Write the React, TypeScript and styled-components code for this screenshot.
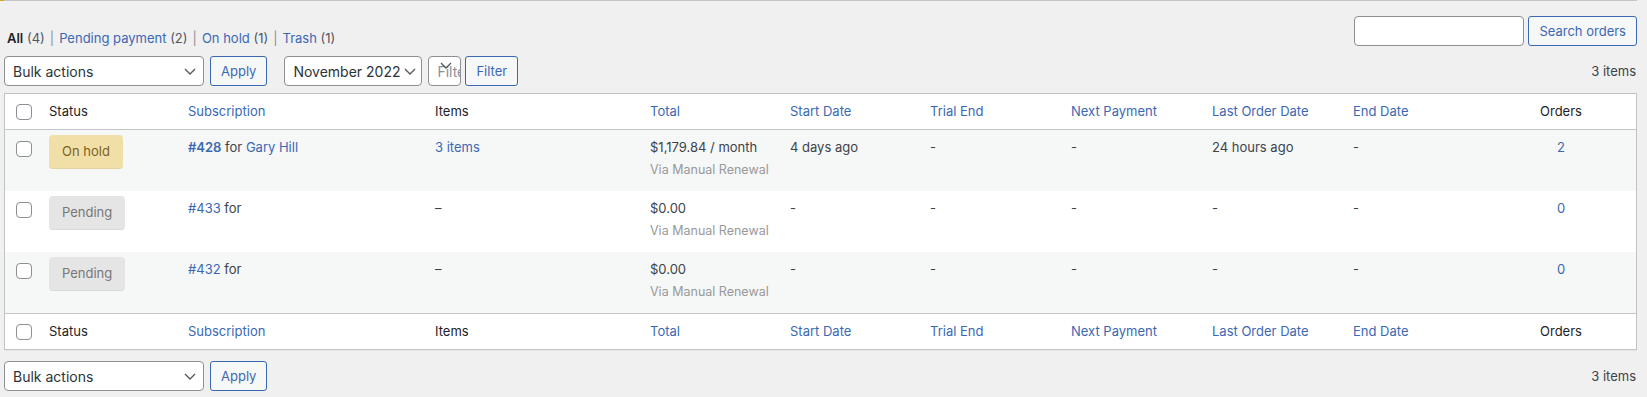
import React from "react";
import styled, { createGlobalStyle } from "styled-components";

const GlobalStyle = createGlobalStyle`
  html, body {
    margin: 0;
    padding: 0;
    background: #f0f0f1;
    font-family: Inter, "Noto Sans", "Liberation Sans", sans-serif;
    font-size: 13px;
    color: #3c434a;
  }
`;

const Wrap = styled.div`
  padding: 0 10px 0 0;
`;

const NoticeEdge = styled.div`
  height: 1px;
  background: #c3c4c7;
  border-left: 4px solid #dba617;
`;

const Inner = styled.div`
  padding-left: 4px;
`;

const TopRow = styled.div`
  display: flex;
  justify-content: space-between;
  align-items: flex-start;
  padding-top: 15px;
`;

const SubSub = styled.ul`
  list-style: none;
  margin: 12px 0 0 3px;
  padding: 0;
  display: flex;
  line-height: 20px;
  color: #50575e;
`;

const SubItem = styled.li`
  white-space: pre;
`;

const SubLink = styled.a<{ $current?: boolean }>`
  color: ${(p) => (p.$current ? "#1d2327" : "#3b68b3")};
  font-weight: ${(p) => (p.$current ? 600 : 400)};
  text-decoration: none;
`;

const Sep = styled.span`
  color: #8c8f94;
  padding: 0 5px;
`;

const SearchBox = styled.div`
  display: flex;
  gap: 4px;
`;

const SearchInput = styled.input`
  width: 170px;
  height: 30px;
  box-sizing: border-box;
  border: 1px solid #8c8f94;
  border-radius: 4px;
  background: #fff;
  padding: 0 8px;
  font: inherit;
`;

const Button = styled.button`
  height: 30px;
  box-sizing: border-box;
  border: 1px solid #3b68b3;
  border-radius: 3px;
  background: #f6f7f7;
  color: #3b68b3;
  font-family: inherit;
  font-size: 13px;
  padding: 0 10px;
  cursor: pointer;
  white-space: nowrap;
`;

const TableNav = styled.div<{ $bottom?: boolean }>`
  display: flex;
  align-items: center;
  justify-content: space-between;
  height: 30px;
  margin-top: ${(p) => (p.$bottom ? "11px" : "8px")};
`;

const Actions = styled.div`
  display: flex;
  align-items: center;
  gap: 6px;
`;

const Group = styled.div`
  display: flex;
  align-items: center;
  gap: 6px;
  margin-left: 11px;
`;

const SelectWrap = styled.div<{ $width?: number }>`
  position: relative;
  display: inline-flex;
  width: ${(p) => (p.$width ? `${p.$width}px` : "auto")};
`;

const Select = styled.select<{ $pr?: number }>`
  appearance: none;
  -webkit-appearance: none;
  width: 100%;
  height: 30px;
  box-sizing: border-box;
  border: 1px solid #8c8f94;
  border-radius: 4px;
  background: #fff;
  color: #2c3338;
  font-family: inherit;
  font-size: 14px;
  padding: 0 ${(p) => p.$pr ?? 28}px 0 8px;
`;

const Chevron = styled.svg<{ $top?: number; $right?: number }>`
  position: absolute;
  right: ${(p) => p.$right ?? 8}px;
  top: ${(p) => p.$top ?? 12}px;
  pointer-events: none;
`;

const FakeSelect = styled.div`
  position: relative;
  width: 33px;
  height: 30px;
  box-sizing: border-box;
  border: 1px solid #8c8f94;
  border-radius: 4px;
  background: #fff;
  overflow: hidden;
  display: flex;
  align-items: center;
  padding-left: 8px;
  color: #8c8f94;
  font-size: 14px;
  white-space: nowrap;
`;

const FakeText = styled.span`
  display: block;
  width: 23px;
  overflow: hidden;
`;

const Count = styled.div`
  color: #3c434a;
  font-size: 13px;
  padding-right: 1px;
`;

const Table = styled.table`
  width: 100%;
  margin-top: 7px;
  border: 1px solid #c3c4c7;
  border-spacing: 0;
  table-layout: fixed;
  background: #fff;
  box-shadow: 0 1px 1px rgba(0, 0, 0, 0.04);
`;

const Th = styled.th<{ $center?: boolean; $cb?: boolean; $top?: boolean }>`
  font-weight: 400;
  text-align: ${(p) => (p.$center ? "center" : "left")};
  padding: ${(p) => (p.$cb ? "8px 0 8px 11px" : "8px 10px")};
  line-height: 19px;
  color: #1d2327;
  font-size: 13px;
  border-bottom: ${(p) => (p.$top ? "1px solid #c3c4c7" : "none")};
  border-top: ${(p) => (p.$top ? "none" : "1px solid #c3c4c7")};
  vertical-align: middle;
`;

const ColLink = styled.a`
  color: #3b68b3;
  text-decoration: none;
`;

const Tr = styled.tr<{ $alt?: boolean }>`
  background: ${(p) => (p.$alt ? "#f6f7f7" : "#fff")};
`;

const Td = styled.td<{ $center?: boolean; $cb?: boolean }>`
  vertical-align: top;
  text-align: ${(p) => (p.$center ? "center" : "left")};
  padding: ${(p) => (p.$cb ? "11px 0 0 11px" : "8px 10px")};
  height: 45px;
  line-height: 19.5px;
  color: #3c434a;
`;

const Box = styled.span`
  display: block;
  width: 16px;
  height: 16px;
  box-sizing: border-box;
  border: 1px solid #8c8f94;
  border-radius: 4px;
  background: #fff;
`;

const Mark = styled.mark<{ $status: "on-hold" | "pending" }>`
  display: inline-flex;
  margin: -3px 0;
  line-height: 32.5px;
  border-radius: 4px;
  border-bottom: 1px solid rgba(0, 0, 0, 0.05);
  white-space: nowrap;
  background: ${(p) => (p.$status === "on-hold" ? "#f0e0a8" : "#e5e5e5")};
  color: ${(p) => (p.$status === "on-hold" ? "#7d5f1e" : "#777")};
  padding: 0 13px;
`;

const Link = styled.a<{ $bold?: boolean }>`
  color: #3b68b3;
  text-decoration: none;
  font-weight: ${(p) => (p.$bold ? 600 : 400)};
`;

const Meta = styled.small`
  display: block;
  margin-top: 2px;
  font-size: 12.5px;
  line-height: 20px;
  color: #999;
`;

const ChevronIcon = ({ top, right }: { top?: number; right?: number }) => (
  <Chevron $top={top} $right={right} width="12" height="7" viewBox="0 0 12 7">
    <polyline points="1,1 6,6 11,1" fill="none" stroke="#50575e" strokeWidth="1.3" />
  </Chevron>
);

const columns: { key: string; label: string; link?: boolean; width: number; center?: boolean }[] = [
  { key: "status", label: "Status", width: 139 },
  { key: "sub", label: "Subscription", link: true, width: 247 },
  { key: "items", label: "Items", width: 215 },
  { key: "total", label: "Total", link: true, width: 140 },
  { key: "start", label: "Start Date", link: true, width: 140 },
  { key: "trial", label: "Trial End", link: true, width: 141 },
  { key: "next", label: "Next Payment", link: true, width: 141 },
  { key: "last", label: "Last Order Date", link: true, width: 141 },
  { key: "end", label: "End Date", link: true, width: 143 },
  { key: "orders", label: "Orders", width: 150, center: true },
];

type Row = {
  id: string;
  status: "on-hold" | "pending";
  customer?: string;
  items: string;
  total: string;
  start: string;
  last: string;
  orders: string;
  bold?: boolean;
};

const rows: Row[] = [
  { id: "#428", status: "on-hold", customer: "Gary Hill", items: "3 items", total: "$1,179.84 / month", start: "4 days ago", last: "24 hours ago", orders: "2", bold: true },
  { id: "#433", status: "pending", items: "–", total: "$0.00", start: "-", last: "-", orders: "0" },
  { id: "#432", status: "pending", items: "–", total: "$0.00", start: "-", last: "-", orders: "0" },
];

const HeadRow = ({ top }: { top?: boolean }) => (
  <tr>
    <Th $cb $top={top}>
      <Box />
    </Th>
    {columns.map((c) => (
      <Th key={c.key} $center={c.center} $top={top}>
        {c.link ? <ColLink href="#">{c.label}</ColLink> : c.label}
      </Th>
    ))}
  </tr>
);

const BulkActions = () => (
  <Actions>
    <SelectWrap $width={200}>
      <Select defaultValue="bulk">
        <option value="bulk">Bulk actions</option>
      </Select>
      <ChevronIcon />
    </SelectWrap>
    <Button>Apply</Button>
  </Actions>
);

export default function App() {
  return (
    <Wrap>
      <GlobalStyle />
      <NoticeEdge />
      <Inner>
        <TopRow>
          <SubSub>
            <SubItem>
              <SubLink href="#" $current>All</SubLink> (4)
              <Sep>|</Sep>
            </SubItem>
            <SubItem>
              <SubLink href="#">Pending payment</SubLink> (2)
              <Sep>|</Sep>
            </SubItem>
            <SubItem>
              <SubLink href="#">On hold</SubLink> (1)
              <Sep>|</Sep>
            </SubItem>
            <SubItem>
              <SubLink href="#">Trash</SubLink> (1)
            </SubItem>
          </SubSub>
          <SearchBox>
            <SearchInput type="search" />
            <Button>Search orders</Button>
          </SearchBox>
        </TopRow>

        <TableNav>
          <Actions>
            <BulkActions />
            <Group>
              <SelectWrap $width={138}>
                <Select defaultValue="nov" $pr={20}>
                  <option value="nov">November 2022</option>
                </Select>
                <ChevronIcon right={6} />
              </SelectWrap>
              <FakeSelect>
                <FakeText>Filter</FakeText>
                <ChevronIcon top={5} right={8} />
              </FakeSelect>
              <Button style={{ marginLeft: -2 }}>Filter</Button>
            </Group>
          </Actions>
          <Count>3 items</Count>
        </TableNav>

        <Table>
          <colgroup>
            <col style={{ width: 34 }} />
            {columns.map((c) => (
              <col key={c.key} style={{ width: c.width }} />
            ))}
          </colgroup>
          <thead>
            <HeadRow top />
          </thead>
          <tbody>
            {rows.map((r, i) => (
              <Tr key={r.id} $alt={i % 2 === 0}>
                <Td $cb>
                  <Box />
                </Td>
                <Td>
                  <Mark $status={r.status}>{r.status === "on-hold" ? "On hold" : "Pending"}</Mark>
                </Td>
                <Td>
                  <Link href="#" $bold={r.bold}>{r.id}</Link> for{" "}
                  {r.customer && <Link href="#">{r.customer}</Link>}
                </Td>
                <Td>{r.items === "–" ? r.items : <Link href="#">{r.items}</Link>}</Td>
                <Td>
                  {r.total}
                  <Meta>Via Manual Renewal</Meta>
                </Td>
                <Td>{r.start}</Td>
                <Td>-</Td>
                <Td>-</Td>
                <Td>{r.last}</Td>
                <Td>-</Td>
                <Td $center>
                  <Link href="#">{r.orders}</Link>
                </Td>
              </Tr>
            ))}
          </tbody>
          <tfoot>
            <HeadRow />
          </tfoot>
        </Table>

        <TableNav $bottom>
          <BulkActions />
          <Count>3 items</Count>
        </TableNav>
      </Inner>
    </Wrap>
  );
}
